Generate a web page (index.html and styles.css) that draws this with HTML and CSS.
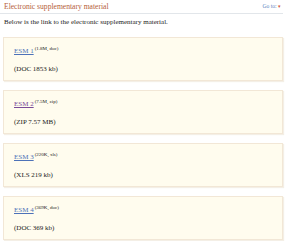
FILE: index.html
```html
<!DOCTYPE html>
<html lang="en">
<head>
    <meta charset="UTF-8">
    <title>Electronic supplementary material</title>
    <link rel="stylesheet" href="styles.css">
</head>
<body>
    <div class="page">
        <div class="head">
            <h2>Electronic supplementary material</h2>
            <span class="goto">Go to: <span class="arrow">&#9662;</span></span>
        </div>
        <p class="intro">Below is the link to the electronic supplementary material.</p>

        <div class="sup">
            <p><a href="#">ESM 1</a><sup>(1.8M, doc)</sup></p>
            <p>(DOC 1853 kb)</p>
        </div>
        <div class="sup">
            <p><a href="#" class="visited">ESM 2</a><sup>(7.5M, zip)</sup></p>
            <p>(ZIP 7.57 MB)</p>
        </div>
        <div class="sup">
            <p><a href="#">ESM 3</a><sup>(220K, xls)</sup></p>
            <p>(XLS 219 kb)</p>
        </div>
        <div class="sup">
            <p><a href="#">ESM 4</a><sup>(369K, doc)</sup></p>
            <p>(DOC 369 kb)</p>
        </div>
    </div>
</body>
</html>
```

FILE: styles.css
```css
body {
    margin: 0;
    background-color: #fff;
    font-family: "Liberation Serif", "Times New Roman", serif;
    color: #222;
}
.page {
    width: 283px;
}
.head {
    display: flex;
    justify-content: space-between;
    align-items: center;
    padding: 2px 2px 2px 4px;
    border-bottom: 1px solid #e2e6ea;
}
.head h2 {
    margin: 0;
    font-size: 7.6px;
    line-height: 8px;
    font-weight: normal;
    color: #b5603a;
}
.goto {
    font-size: 5.6px;
    line-height: 8px;
    color: #5a7fbd;
}
.arrow {
    color: #d0553a;
    font-size: 5px;
}
.intro {
    margin: 4px 0 11px 4px;
    font-size: 7px;
    line-height: 8px;
    color: #222;
}
.sup {
    margin: 0 0 9px 3px;
    padding: 9px 10px 7px;
    background-color: #fffcee;
    border: 1px solid #f2e7d6;
    box-shadow: 1px 1px 1px #f4efe6;
}
.sup p {
    margin: 0;
    font-size: 7px;
    line-height: 8px;
    color: #222;
}
.sup p:first-child {
    margin-bottom: 10px;
}
.sup a {
    color: #4d72b8;
    text-decoration: underline;
}
.sup a.visited {
    color: #7a4b98;
}
.sup sup {
    font-size: 5px;
    line-height: 0;
    vertical-align: 3px;
    margin-left: 1px;
}
```
